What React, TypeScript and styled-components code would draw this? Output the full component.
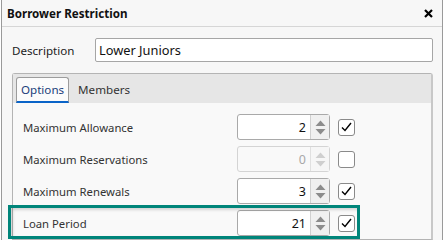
import styled, { createGlobalStyle } from 'styled-components';

const GlobalStyle = createGlobalStyle`
  html, body {
    margin: 0;
    padding: 0;
    background: #ffffff;
    overflow: hidden;
  }
  body {
    font-family: 'Noto Sans', 'Open Sans', sans-serif;
    font-size: 11.3px;
    color: #1e1e1e;
  }
`;

const Window = styled.div`
  margin-left: 1px;
  width: 442px;
  height: 280px;
  box-sizing: border-box;
  border-left: 1px solid #9a9a9a;
  border-right: 1px solid #9a9a9a;
  background: #f7f7f7;
`;

const TitleBar = styled.div`
  height: 26px;
  display: flex;
  align-items: center;
  justify-content: space-between;
  padding: 0 9px 0 5px;
  border-bottom: 1px solid #d6d6d6;
  font-weight: 700;
  font-size: 11.6px;
  color: #111;
`;

const CloseIcon = styled.svg`
  width: 9px;
  height: 9px;
`;

const Body = styled.div`
  padding: 11px 9px 0 10px;
`;

const FieldRow = styled.div`
  display: flex;
  align-items: center;
  height: 24px;
`;

const FieldLabel = styled.span`
  width: 83px;
  font-size: 11.6px;
  color: #222;
`;

const TextInput = styled.div`
  flex: 1;
  height: 24px;
  box-sizing: border-box;
  border: 1px solid #a6a6a6;
  border-radius: 2px;
  background: #fff;
  display: flex;
  align-items: center;
  padding-left: 3px;
  font-size: 12.8px;
  color: #111;
`;

const TabPanel = styled.div`
  margin-top: 11px;
  border: 1px solid #b4b4b4;
  border-right: 2px solid #c8c8c8;
  border-radius: 3px 3px 0 0;
  background: #f9f9f9;
`;

const TabStrip = styled.div`
  height: 29px;
  box-sizing: border-box;
  padding: 3px 3px 0;
  display: flex;
  align-items: flex-end;
  background: #e6e6e6;
`;

const Tab = styled.div<{ $active?: boolean }>`
  height: 26px;
  box-sizing: border-box;
  display: flex;
  align-items: center;
  padding: 0 4px;
  margin-right: 4px;
  font-size: 11.6px;
  color: ${(p) => (p.$active ? '#1a3e7a' : '#333')};
  border: 1px solid ${(p) => (p.$active ? '#9c9c9c' : 'transparent')};
  border-bottom: 2px solid ${(p) => (p.$active ? '#0a64c8' : 'transparent')};
  border-radius: 3px 3px 0 0;
  background: ${(p) => (p.$active ? '#fbfbfb' : 'transparent')};
`;

const Rows = styled.div`
  padding: 8px 0 0 10px;
`;

const Row = styled.div`
  position: relative;
  height: 32px;
  display: grid;
  grid-template-columns: 214px 93px 8px 17px;
  align-items: center;
`;

const RowLabel = styled.span`
  color: #333;
`;

const Highlight = styled.div`
  position: absolute;
  left: -15px;
  top: -2px;
  width: 352px;
  height: 34px;
  box-sizing: border-box;
  border: 3px solid #00857a;
  box-shadow: inset 2px 2px 3px rgba(0, 0, 0, 0.15);
  pointer-events: none;
`;

const Spinner = styled.div<{ $disabled?: boolean }>`
  height: 26px;
  box-sizing: border-box;
  display: flex;
  border: 1px solid ${(p) => (p.$disabled ? '#d4d4d4' : '#a9a9a9')};
  border-radius: 3px;
  background: ${(p) => (p.$disabled ? '#f9f9f9' : '#ffffff')};
`;

const SpinValue = styled.span<{ $disabled?: boolean }>`
  flex: 1;
  display: flex;
  align-items: center;
  justify-content: flex-end;
  padding-right: 4px;
  font-size: 12.5px;
  color: ${(p) => (p.$disabled ? '#a8a8a8' : '#111')};
`;

const SpinButtons = styled.div<{ $disabled?: boolean }>`
  width: 19px;
  border-left: 1px solid ${(p) => (p.$disabled ? '#e0e0e0' : '#d0d0d0')};
  background: ${(p) => (p.$disabled ? '#f6f6f6' : '#f0f0f0')};
  display: flex;
  flex-direction: column;
  align-items: center;
  justify-content: space-around;
  padding: 3px 0;
  box-sizing: border-box;
  color: ${(p) => (p.$disabled ? '#cfcfcf' : '#8c8c8c')};
`;

const Arrow = styled.svg`
  width: 11px;
  height: 6px;
`;

const Check = styled.div`
  width: 17px;
  height: 17px;
  box-sizing: border-box;
  border: 1px solid #8a8a8a;
  border-radius: 3px;
  background: #fff;
  display: flex;
  align-items: center;
  justify-content: center;
`;

const CheckMark = styled.svg`
  width: 11px;
  height: 10px;
`;

type Item = {
  label: string;
  value: string;
  checked: boolean;
  disabled?: boolean;
  highlighted?: boolean;
};

const items: Item[] = [
  { label: 'Maximum Allowance', value: '2', checked: true },
  { label: 'Maximum Reservations', value: '0', checked: false, disabled: true },
  { label: 'Maximum Renewals', value: '3', checked: true },
  { label: 'Loan Period', value: '21', checked: true, highlighted: true },
];

function NumberSpinner({ value, disabled }: { value: string; disabled?: boolean }) {
  return (
    <Spinner $disabled={disabled}>
      <SpinValue $disabled={disabled}>{value}</SpinValue>
      <SpinButtons $disabled={disabled}>
        <Arrow viewBox="0 0 11 6">
          <path d="M0.5 6 L5.5 0.5 L10.5 6 Z" fill="currentColor" />
        </Arrow>
        <Arrow viewBox="0 0 11 6">
          <path d="M0.5 0 L5.5 5.5 L10.5 0 Z" fill="currentColor" />
        </Arrow>
      </SpinButtons>
    </Spinner>
  );
}

export default function App() {
  return (
    <>
      <GlobalStyle />
      <Window>
        <TitleBar>
          <span>Borrower Restriction</span>
          <CloseIcon viewBox="0 0 9 9">
            <path d="M1 1 L8 8 M8 1 L1 8" stroke="#000" strokeWidth="2.2" />
          </CloseIcon>
        </TitleBar>
        <Body>
          <FieldRow>
            <FieldLabel>Description</FieldLabel>
            <TextInput>Lower Juniors</TextInput>
          </FieldRow>
          <TabPanel>
            <TabStrip>
              <Tab $active>Options</Tab>
              <Tab>Members</Tab>
            </TabStrip>
            <Rows>
              {items.map((item) => (
                <Row key={item.label}>
                  {item.highlighted && <Highlight />}
                  <RowLabel>{item.label}</RowLabel>
                  <NumberSpinner value={item.value} disabled={item.disabled} />
                  <span />
                  <Check>
                    {item.checked && (
                      <CheckMark viewBox="0 0 11 10">
                        <path d="M1 5.5 L4 8.5 L10 1" fill="none" stroke="#000" strokeWidth="1.4" />
                      </CheckMark>
                    )}
                  </Check>
                </Row>
              ))}
            </Rows>
          </TabPanel>
        </Body>
      </Window>
    </>
  );
}
